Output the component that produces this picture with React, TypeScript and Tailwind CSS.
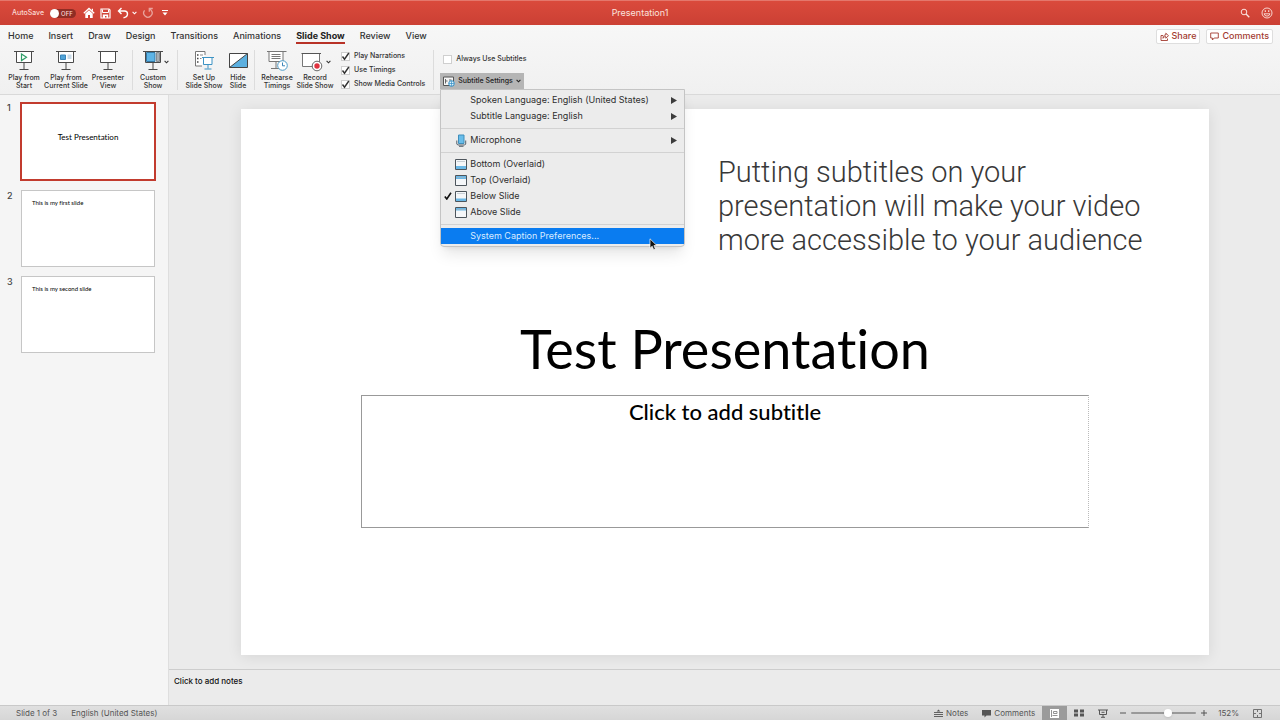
import type { ReactNode } from "react";

const tabs = ["Home", "Insert", "Draw", "Design", "Transitions", "Animations", "Slide Show", "Review", "View"];

/* ---------- Title bar icons ---------- */

function HomeIcon() {
  return (
    <svg viewBox="0 0 12 12" className="size-3" fill="none" aria-hidden="true">
      <path d="M.8 6.200 6 1.400l5.200 4.800" stroke="#fff" strokeWidth="1.300" />
      <path d="M2.300 6.600 6 3.300l3.700 3.300V11H7V8H5v3H2.300z" fill="#fff" />
      <path d="M8.800 1.800h1.200v2.500L8.800 3.200z" fill="#fff" />
    </svg>
  );
}

function SaveIcon() {
  return (
    <svg viewBox="0 0 11 11" className="size-[11px]" fill="none" aria-hidden="true">
      <path d="M1 1h8l1 1v8H1z" stroke="#fff" strokeWidth="1.200" />
      <path d="M2.500 1.500v3h6v-3" stroke="#fff" strokeWidth="1" />
      <path d="M2.800 6.500h5.400V10H6.500V8H5v2H2.800z" fill="#fff" />
    </svg>
  );
}

function UndoIcon() {
  return (
    <svg viewBox="0 0 12 12" className="size-3" fill="none" stroke="#fff" strokeWidth="1.400" aria-hidden="true">
      <path d="M4.500 1 1.500 4l3 3M1.500 4h6a3 3 0 0 1 3 3c0 2-1.500 3.300-4 3.800" />
    </svg>
  );
}

function RedoIcon() {
  return (
    <svg viewBox="0 0 12 12" className="size-3 opacity-50" fill="none" stroke="#fff" strokeWidth="1.300" aria-hidden="true">
      <path d="M2.600 3.400A4.200 4.200 0 1 0 9.200 3.400L7.800 1.800" />
      <path d="M7.300 4.800V1.500h3.500" />
    </svg>
  );
}

function Chevron({ className }: { className: string }) {
  return (
    <svg viewBox="0 0 5 4" className={className} fill="none" stroke="currentColor" strokeWidth="1.100" aria-hidden="true">
      <path d="m.6.8 1.900 2L4.400.8" />
    </svg>
  );
}

function SearchIcon() {
  return (
    <svg viewBox="0 0 10 10" className="size-2.5" fill="none" stroke="#fbe3df" aria-hidden="true">
      <circle cx="4" cy="4" r="2.800" />
      <path d="m6 6 3.300 3.300" strokeWidth="1.300" />
    </svg>
  );
}

function SmileIcon() {
  return (
    <svg viewBox="0 0 12 12" className="size-3" fill="none" stroke="#fbe3df" strokeWidth=".9" aria-hidden="true">
      <circle cx="6" cy="6" r="5" />
      <path d="M3 6.800a3.100 3.100 0 0 0 6 0z" />
      <path d="M4.300 3.300v1.600M7.700 3.300v1.600" strokeWidth="1.100" />
    </svg>
  );
}

/* ---------- Ribbon icons ---------- */

function Easel({ children }: { children?: ReactNode }) {
  return (
    <svg viewBox="0 0 22 22" className="h-[22px] w-[22px]" fill="none" stroke="#4a4a4a" aria-hidden="true">
      <path d="M3.500 2v10.500h15V2" fill="#fff" />
      <path d="M1 1.500h20M11 12.500V19M6.500 19.500h9" />
      {children}
    </svg>
  );
}

function PlayStartIcon() {
  return (
    <Easel>
      <path d="m8.500 4 5 3.300-5 3.300z" stroke="#2f9e68" strokeWidth="1.200" fill="#fff" />
    </Easel>
  );
}

function PlayCurrentIcon() {
  return (
    <Easel>
      <path d="M5.500 5h5v4.500h-5z" fill="#4fa3d8" stroke="#3984b8" />
      <path d="M12.500 4.500h4v4.500h-4z" fill="#c9dbe8" stroke="none" />
    </Easel>
  );
}

function CustomShowIcon() {
  return (
    <Easel>
      <path d="M4.500 2.500h8.500V11.500H4.500z" fill="#5db4e6" stroke="#3479a5" />
      <path d="M14.500 2.500h3v9h-3z" fill="#a7aeb3" stroke="#858b90" />
    </Easel>
  );
}

function SetUpIcon() {
  return (
    <svg viewBox="0 0 22 22" className="h-[22px] w-[22px]" fill="none" aria-hidden="true">
      <path d="M12 5V1.500H2.500V16H9" stroke="#777" fill="#fff" />
      <path d="M4 5h1.500M4 8.500h1.500M4 12h1.500" stroke="#444" strokeWidth="1.500" />
      <path d="M7 5h3M7 8.500h1.500" stroke="#888" />
      <path d="M10.500 8v6.500h8.500V8" fill="#fff" stroke="#3c93c4" />
      <path d="M9 7.500h12M15 14.500v4M11.500 19h7" stroke="#3c93c4" />
    </svg>
  );
}

function HideIcon() {
  return (
    <svg viewBox="0 0 22 22" className="h-[22px] w-[22px]" fill="none" aria-hidden="true">
      <path d="M2.500 3.500h18v14h-18z" fill="#fff" />
      <path d="M20.500 3.500v14h-18z" fill="#5cb0e0" />
      <path d="M2.500 3.500h18v14h-18zM2.500 17.500l18-14" stroke="#444" />
    </svg>
  );
}

function RehearseIcon() {
  return (
    <svg viewBox="0 0 22 22" className="h-[22px] w-[22px]" fill="none" stroke="#777" aria-hidden="true">
      <path d="M3 2v9.500h14V2" fill="#fff" />
      <path d="M1 1.500h19.500M5.500 4.500h9M5.500 6.500h9M5.500 8.500h9M10 11.500V18M5 18.500h8" />
      <circle cx="16.500" cy="15.500" r="4.800" fill="#fff" stroke="#4c9cc9" />
      <path d="M16.500 12.500v3.300H19" stroke="#3984b8" />
    </svg>
  );
}

function RecordIcon() {
  return (
    <svg viewBox="0 0 22 22" className="mr-1.5 h-[22px] w-[22px]" fill="none" aria-hidden="true">
      <path d="M1.500 3.500h17v13h-17z" fill="#fff" stroke="#777" />
      <path d="M.5 3.500h19.500" stroke="#555" />
      <circle cx="16" cy="16" r="4.800" fill="#fff" stroke="#666" />
      <circle cx="16" cy="16" r="2.700" fill="#e03340" />
    </svg>
  );
}

function SubtitleIcon() {
  return (
    <svg viewBox="0 0 12 11" className="h-[11px] w-3" fill="none" aria-hidden="true">
      <path d="M.5 1h10v8.500H.5z" fill="#f4f4f4" stroke="#555" />
      <path d="M2.500 3v4.500M2.500 5h2M6 4h2.500" stroke="#666" />
      <circle cx="8.500" cy="7.500" r="2.800" fill="#dff0fa" stroke="#2f8dc4" />
      <path d="M6 7.500h5M8.500 5v5" stroke="#2f8dc4" strokeWidth=".7" />
    </svg>
  );
}

/* ---------- Menu icons ---------- */

function MicIcon() {
  return (
    <svg viewBox="0 0 12 13" className="h-[13px] w-3" fill="none" aria-hidden="true">
      <path d="M3.500 1h5.500v8.500h-5.500z" fill="#69bdea" stroke="#3e8ebb" />
      <path d="M1.800 6.500V10l1 1h6.900l1-1V6.500M4 12.300h4.500" stroke="#55616b" />
    </svg>
  );
}

function LayoutIcon({ fill }: { fill: string }) {
  return (
    <svg viewBox="0 0 12 11" className="h-[11px] w-3" fill="none" aria-hidden="true">
      <path d="M.5.500h11v10H.5z" fill="#f5f7f9" />
      <path d={fill} fill="#6bb8e6" />
      <path d="M.5.500h11v10H.5z" stroke="#4d555c" />
      <path d="M2 2.500h8" stroke="#a9b4bc" strokeWidth=".6" />
    </svg>
  );
}

function MenuRow({
  label,
  icon,
  checked,
  submenu,
}: {
  label: string;
  icon?: ReactNode;
  checked?: boolean;
  submenu?: boolean;
}) {
  return (
    <button type="button" role="menuitem" className="flex h-4 w-full items-center text-left text-[9px] text-[#2e2e2e]">
      <span className="flex w-3.5 justify-center">
        {checked && (
          <svg viewBox="0 0 8 8" className="size-2" fill="none" stroke="#111" strokeWidth="1.600" aria-hidden="true">
            <path d="m.8 4.500 2 2.500L7 .8" />
          </svg>
        )}
      </span>
      <span className="mr-[3px] flex w-3 justify-center">{icon}</span>
      <span className="flex-1 whitespace-nowrap">{label}</span>
      {submenu && (
        <svg viewBox="0 0 6 7" className="mr-[7px] h-[7px] w-1.5" fill="#3c3c3c" aria-hidden="true">
          <path d="M0 0v7l6-3.500z" />
        </svg>
      )}
    </button>
  );
}

function MenuSeparator() {
  return <hr className="mt-1 mb-[3px] border-[#d2d2d2]" />;
}

function SubtitleMenu() {
  return (
    <div
      role="menu"
      className="absolute top-full left-0 z-10 w-[245px] rounded-b-sm border border-[#c4c4c4] bg-[#ececec] pt-0.5 shadow-lg"
    >
      <MenuRow label="Spoken Language: English (United States)" submenu />
      <MenuRow label="Subtitle Language: English" submenu />
      <MenuSeparator />
      <MenuRow label="Microphone" icon={<MicIcon />} submenu />
      <MenuSeparator />
      <MenuRow label="Bottom (Overlaid)" icon={<LayoutIcon fill="M1 7h10v3H1z" />} />
      <MenuRow label="Top (Overlaid)" icon={<LayoutIcon fill="M1 1h10v3H1z" />} />
      <MenuRow label="Below Slide" icon={<LayoutIcon fill="M1 7.500h10V10H1z" />} checked />
      <MenuRow label="Above Slide" icon={<LayoutIcon fill="M1 1h10v2.500H1z" />} />
      <MenuSeparator />
      <div className="relative pb-0.5">
        <button
          type="button"
          role="menuitem"
          className="flex h-4 w-full items-center bg-[#0a7cf0] pl-[29px] text-[9px] text-[#d9ebff]"
        >
          System Caption Preferences...
        </button>
        <svg viewBox="0 0 9 13" className="absolute top-2.5 right-[26px] h-[13px] w-[9px]" aria-hidden="true">
          <path d="M1 .8v9.400l2.200-2 1.500 3.600 1.700-.7L4.900 7.600h3z" fill="#111" stroke="#fff" strokeWidth=".7" />
        </svg>
      </div>
    </div>
  );
}

/* ---------- Ribbon parts ---------- */

function RibbonButton({
  icon,
  lines,
  width,
  dropdown,
}: {
  icon: ReactNode;
  lines: [string, string];
  width: string;
  dropdown?: string;
}) {
  return (
    <button type="button" className={`relative flex flex-col items-center text-[7px] leading-2 font-medium whitespace-nowrap text-[#333] ${width}`}>
      {icon}
      <span className="mt-0.5">{lines[0]}</span>
      <span>{lines[1]}</span>
      {dropdown && <Chevron className={`absolute top-2.5 h-1 w-[5px] ${dropdown}`} />}
    </button>
  );
}

function Check({ label, checked = false }: { label: string; checked?: boolean }) {
  return (
    <label className="flex items-center gap-1 text-[7px] leading-3 font-medium whitespace-nowrap text-[#333]">
      <span className="grid place-items-center">
        <input
          type="checkbox"
          defaultChecked={checked}
          className="peer col-start-1 row-start-1 size-[9px] appearance-none border border-[#cfcfcf] bg-white"
        />
        <svg
          viewBox="0 0 9 9"
          className="pointer-events-none invisible col-start-1 row-start-1 size-[9px] peer-checked:visible"
          fill="none"
          stroke="#333"
          strokeWidth="1.400"
          aria-hidden="true"
        >
          <path d="m1.500 4.500 2 2.700L7.800 1" />
        </svg>
      </span>
      {label}
    </label>
  );
}

function Divider() {
  return <div className="w-px self-stretch bg-[#dcdcdc]" />;
}

/* ---------- Slide thumbnails ---------- */

function Thumbnail({ index, selected, children }: { index: number; selected?: boolean; children: ReactNode }) {
  return (
    <li className="flex items-start gap-2 pr-3 pl-[7px]">
      <span className="w-[5px] font-['Inter',sans-serif] text-[9px] leading-3 font-medium text-[#444]">{index}</span>
      <button
        type="button"
        className={
          selected
            ? "flex aspect-[136/79] flex-1 items-start justify-center border-2 border-[#c23b2e] bg-white pt-[27px] text-[8px] text-black"
            : "mx-px flex aspect-[134/77] flex-1 items-start border border-[#c6c6c6] bg-white px-2.5 pt-2 text-[6px] leading-2 text-black"
        }
      >
        {children}
      </button>
    </li>
  );
}

export default function App() {
  return (
    <div className="flex h-screen min-h-[600px] flex-col overflow-hidden bg-[#ebebeb] font-['Inter',sans-serif] text-[#333]">
      <header className="grid h-[25px] shrink-0 grid-cols-[1fr_auto_1fr] items-center border-t border-[#e4776c] bg-linear-to-b from-[#da4a3c] to-[#cb4034] px-[7px] text-white">
        <div className="flex items-center pl-[5px]">
          <label className="flex items-center gap-1.5 text-[7px] font-medium text-[#fbd9d4]">
            AutoSave
            <span className="grid items-center">
              <input
                type="checkbox"
                role="switch"
                className="col-start-1 row-start-1 h-[9px] w-[26px] appearance-none rounded-full bg-[#8f2d24]"
              />
              <span className="pointer-events-none col-start-1 row-start-1 flex items-center gap-0.5 text-[6px]">
                <span className="size-[9px] rounded-full bg-white" />
                OFF
              </span>
            </span>
          </label>
          <button type="button" aria-label="Home" className="ml-[7px]"><HomeIcon /></button>
          <button type="button" aria-label="Save" className="ml-[5px]"><SaveIcon /></button>
          <button type="button" aria-label="Undo" className="ml-1.5"><UndoIcon /></button>
          <button type="button" aria-label="Undo history" className="ml-[3px]"><Chevron className="h-1 w-[5px]" /></button>
          <button type="button" aria-label="Redo" className="ml-[5px]"><RedoIcon /></button>
          <button type="button" aria-label="Customize toolbar" className="ml-2">
            <svg viewBox="0 0 6 6" className="size-1.5" fill="#fff" aria-hidden="true">
              <path d="M0 0h6v1H0zM.5 2.500h5L3 5.500z" />
            </svg>
          </button>
        </div>
        <h1 className="text-[9px] text-[#fbe3df]">Presentation1</h1>
        <div className="flex items-center justify-end gap-[11px]">
          <button type="button" aria-label="Search"><SearchIcon /></button>
          <button type="button" aria-label="Feedback"><SmileIcon /></button>
        </div>
      </header>

      <div className="shrink-0 border-b border-[#d9d9d9] bg-linear-to-b from-[#f7f7f7] to-[#f0f0f0]">
        <div className="flex h-[22px] items-center justify-between pr-[7px] pl-2">
          <nav className="flex items-center gap-[15px] text-[9px] font-medium">
            {tabs.map((tab) => (
              <a
                key={tab}
                href="#"
                className={
                  tab === "Slide Show"
                    ? "border-b-2 border-[#b83227] leading-[13px] font-bold text-[#222]"
                    : "border-b-2 border-transparent leading-[13px] text-[#333]"
                }
              >
                {tab}
              </a>
            ))}
          </nav>
          <div className="flex gap-1.5 text-[9px] font-medium text-[#a33b31]">
            <button type="button" className="flex h-[15px] items-center gap-[3px] rounded-xs border border-[#dedede] bg-white px-[3px]">
              <svg viewBox="0 0 9 9" className="size-[9px]" fill="none" stroke="currentColor" strokeWidth=".9" aria-hidden="true">
                <path d="M3 3.500H1v5h6.500v-2" />
                <path d="M3 6.300C3 4 4 3 5.800 3V1.200l2.700 2.500-2.700 2.500V4.600C4.500 4.600 3.700 5 3 6.300z" />
              </svg>
              Share
            </button>
            <button type="button" className="flex h-[15px] items-center gap-[3px] rounded-xs border border-[#dedede] bg-white px-[3px]">
              <svg viewBox="0 0 9 9" className="size-[9px]" fill="none" stroke="currentColor" strokeWidth=".9" aria-hidden="true">
                <path d="M.7 1h7.600v5H4.200L2.400 8V6H.7z" />
              </svg>
              Comments
            </button>
          </div>
        </div>

        <div className="flex h-[47px] items-start gap-1 pt-[3px] pb-1 pl-1">
          <div className="flex">
            <RibbonButton icon={<PlayStartIcon />} lines={["Play from", "Start"]} width="w-10" />
            <RibbonButton icon={<PlayCurrentIcon />} lines={["Play from", "Current Slide"]} width="w-11" />
            <RibbonButton icon={<Easel />} lines={["Presenter", "View"]} width="w-10" />
          </div>
          <Divider />
          <div className="pr-1">
            <RibbonButton icon={<CustomShowIcon />} lines={["Custom", "Show"]} width="w-8" dropdown="right-0" />
          </div>
          <Divider />
          <div className="flex">
            <RibbonButton icon={<SetUpIcon />} lines={["Set Up", "Slide Show"]} width="w-11" />
            <RibbonButton icon={<HideIcon />} lines={["Hide", "Slide"]} width="w-6" />
          </div>
          <Divider />
          <div className="flex">
            <RibbonButton icon={<RehearseIcon />} lines={["Rehearse", "Timings"]} width="w-9" />
            <RibbonButton icon={<RecordIcon />} lines={["Record", "Slide Show"]} width="w-10" dropdown="right-1" />
          </div>
          <div className="flex flex-col gap-0.5 pr-1 pl-0.5">
            <Check label="Play Narrations" checked />
            <Check label="Use Timings" checked />
            <Check label="Show Media Controls" checked />
          </div>
          <Divider />
          <div className="flex flex-col items-start gap-2 pt-[3px] pl-0.5">
            <span className="pl-[3px]">
              <Check label="Always Use Subtitles" />
            </span>
            <div className="relative">
              <button
                type="button"
                aria-haspopup="menu"
                aria-expanded="true"
                className="flex h-4 items-center gap-[3px] bg-[#b5b5b5] px-[3px] text-[7px] font-medium whitespace-nowrap text-[#222]"
              >
                <SubtitleIcon />
                Subtitle Settings
                <Chevron className="h-1 w-[5px]" />
              </button>
              <SubtitleMenu />
            </div>
          </div>
        </div>
      </div>

      <div className="flex min-h-0 flex-1">
        <aside className="w-[169px] shrink-0 border-r border-[#dedede] bg-[#f5f5f5] pt-[7px] font-['Lato',sans-serif] [font-variant-ligatures:none]">
          <ol className="flex flex-col gap-[9px]">
            <Thumbnail index={1} selected>Test Presentation</Thumbnail>
            <Thumbnail index={2}>This is my first slide</Thumbnail>
            <Thumbnail index={3}>This is my second slide</Thumbnail>
          </ol>
        </aside>

        <main className="flex min-w-0 flex-1 flex-col">
          <div className="flex min-h-0 flex-1 py-3.5 pr-[71px] pl-[72px]">
            <section className="flex flex-1 flex-col bg-white px-[120px] pt-[46px] font-['Lato',sans-serif] shadow-[0_2px_14px_rgba(0,0,0,0.09)] [font-variant-ligatures:none]">
              <p className="-mr-[70px] w-[441px] self-end font-['Roboto',sans-serif] text-[29px] leading-[34px] font-light whitespace-nowrap text-[#383838]">
                Putting subtitles on your
                <br />
                presentation will make your video
                <br />
                more accessible to your audience
              </p>
              <h2 className="mt-[60px] text-center text-[54px] leading-[64px] font-normal text-black">
                Test Presentation
              </h2>
              <div className="mt-3.5 h-[133px] border border-[#999] border-r-[#bbb] text-center text-[22px] leading-8 font-medium text-black [border-right-style:dotted]">
                Click to add subtitle
              </div>
            </section>
          </div>
          <div className="flex h-9 shrink-0 items-start border-t border-[#cdcdcd] px-[5px] pt-[5px]">
            <button type="button" className="text-[8px] leading-3 font-medium text-[#111]">Click to add notes</button>
          </div>
        </main>
      </div>

      <footer className="flex h-[15px] shrink-0 items-center justify-between border-t border-[#c9c9c9] bg-linear-to-b from-[#e0e0e0] to-[#d6d6d6] pr-[18px] pl-4 text-[8px] text-[#555]">
        <div className="flex gap-3.5">
          <span>Slide 1 of 3</span>
          <button type="button">English (United States)</button>
        </div>
        <div className="flex h-full items-center">
          <button type="button" className="flex items-center gap-[3px]">
            <svg viewBox="0 0 9 9" className="size-[9px]" stroke="#555" fill="#555" aria-hidden="true">
              <path d="M0 3.500h9M0 5.500h9M0 7.500h9" strokeWidth=".9" />
              <path d="M4.500.5 6.300 2.500H2.700z" stroke="none" />
            </svg>
            Notes
          </button>
          <button type="button" className="ml-3.5 flex items-center gap-[3px]">
            <svg viewBox="0 0 9 9" className="size-[9px]" fill="#555" aria-hidden="true">
              <path d="M0 1h9v5.500H4.500L2.500 8.500v-2H0z" />
            </svg>
            Comments
          </button>
          <button type="button" aria-label="Normal view" className="ml-[7px] flex h-full w-[25px] items-center justify-center bg-[#9b9b9b]">
            <svg viewBox="0 0 9 9" className="size-[9px]" fill="none" aria-hidden="true">
              <path d="M0 0h9v9H0z" fill="#fff" />
              <path d="M3.500 2.500h3.500v2H3.500zM2.500 6.500h5M1.500 1v7" stroke="#888" strokeWidth=".9" />
            </svg>
          </button>
          <button type="button" aria-label="Slide sorter" className="ml-[7px]">
            <svg viewBox="0 0 10 8" className="h-2 w-2.5" fill="#555" aria-hidden="true">
              <path d="M0 .5h4v3H0zM6 .5h4v3H6zM0 4.500h4v3H0zM6 4.500h4v3H6z" />
            </svg>
          </button>
          <button type="button" aria-label="Slide show" className="ml-3.5">
            <svg viewBox="0 0 10 9" className="h-[9px] w-2.5" fill="none" stroke="#555" aria-hidden="true">
              <path d="M0 1h10M1.500 1v4.500h7V1M5 5.500V8M3 8.300h4M3.500 3.300h3" />
            </svg>
          </button>
          <button type="button" aria-label="Zoom out" className="ml-3">
            <svg viewBox="0 0 6 6" className="size-1.5" stroke="#555" aria-hidden="true">
              <path d="M0 3h6" />
            </svg>
          </button>
          <input
            type="range"
            aria-label="Zoom"
            min="0"
            max="100"
            defaultValue="57"
            className="ml-[5px] h-2.5 w-[65px] appearance-none bg-transparent [&::-webkit-slider-runnable-track]:h-0.5 [&::-webkit-slider-runnable-track]:rounded-full [&::-webkit-slider-runnable-track]:bg-[#999] [&::-webkit-slider-thumb]:-mt-[3px] [&::-webkit-slider-thumb]:size-2 [&::-webkit-slider-thumb]:appearance-none [&::-webkit-slider-thumb]:rounded-full [&::-webkit-slider-thumb]:bg-white [&::-webkit-slider-thumb]:shadow-sm"
          />
          <button type="button" aria-label="Zoom in" className="ml-[5px]">
            <svg viewBox="0 0 6 6" className="size-1.5" stroke="#555" aria-hidden="true">
              <path d="M0 3h6M3 0v6" />
            </svg>
          </button>
          <button type="button" className="ml-[11px]">152%</button>
          <button type="button" aria-label="Fit slide to window" className="ml-3.5">
            <svg viewBox="0 0 9 9" className="size-[9px]" fill="none" stroke="#666" strokeWidth=".9" aria-hidden="true">
              <path d="M.5.500h8v8h-8z" />
              <path d="M4.500 1v2M4.500 6v2M1 4.500h2M6 4.500h2" />
            </svg>
          </button>
        </div>
      </footer>
    </div>
  );
}
